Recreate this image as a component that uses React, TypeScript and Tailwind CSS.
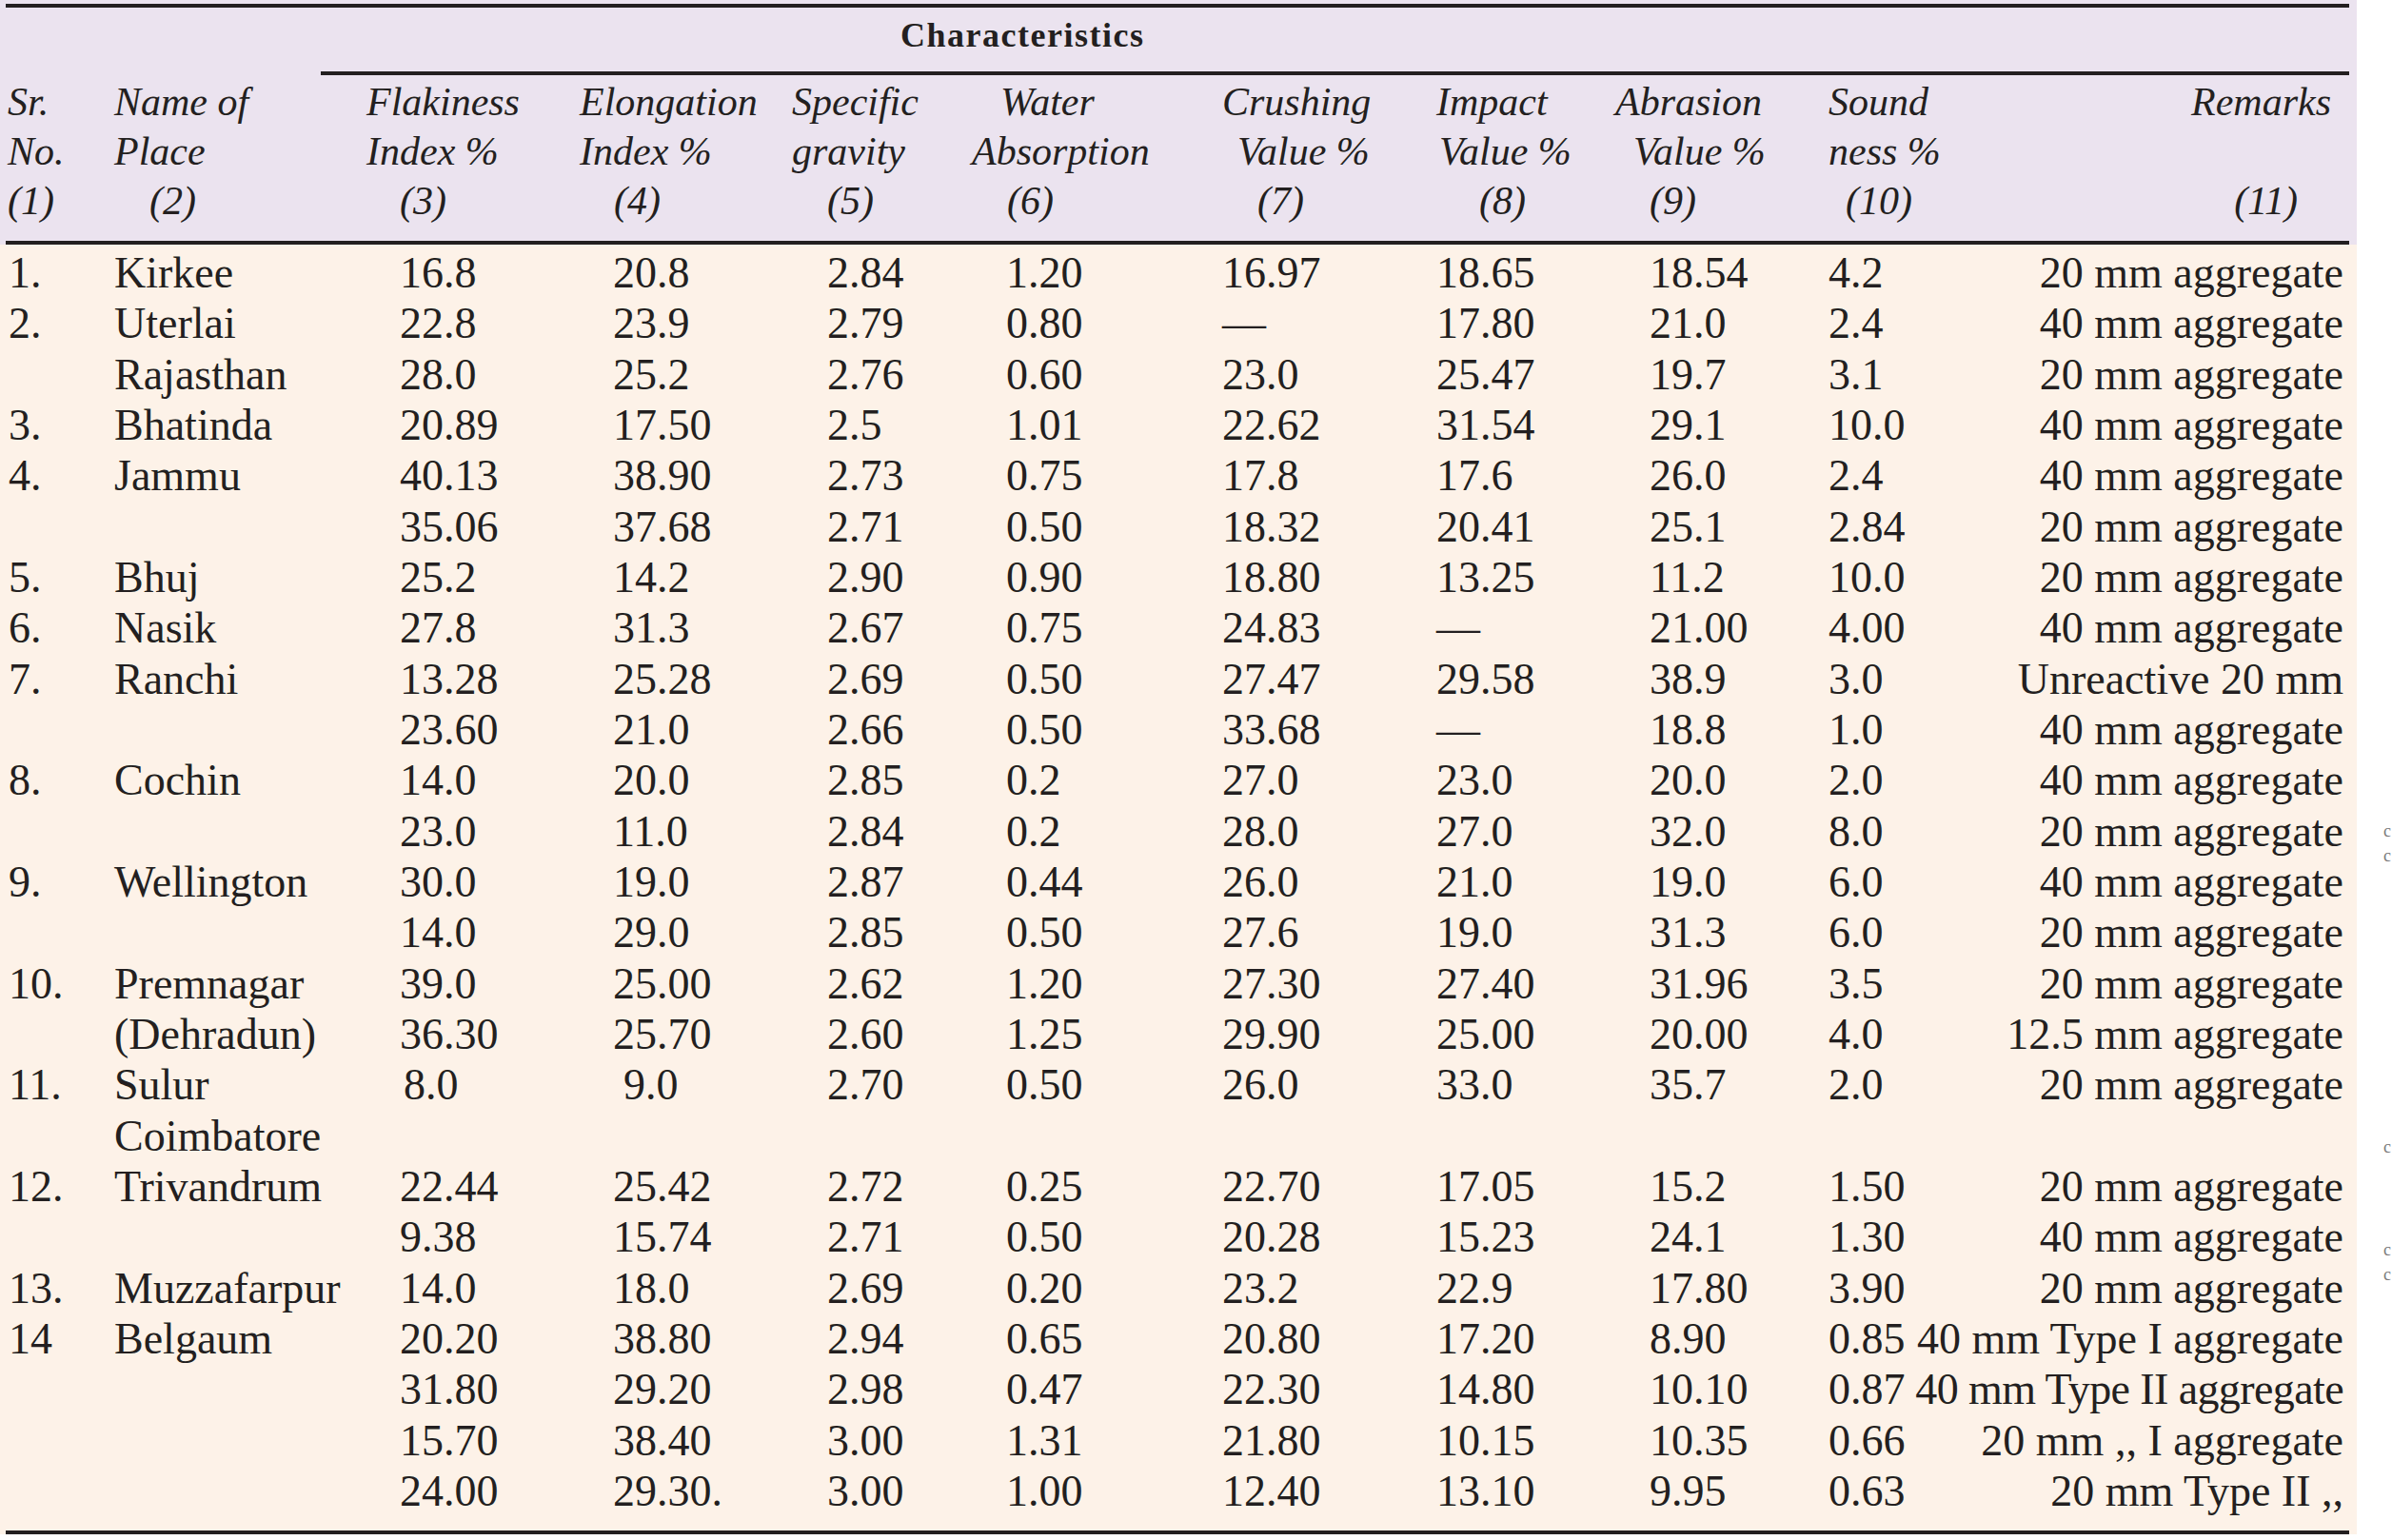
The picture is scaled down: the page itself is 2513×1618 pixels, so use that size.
import React from "react";

type Row = { sr: string; name: string; v: string[]; rem: string; remCls?: string };

const rows: Row[] = [
  { sr: "1.", name: "Kirkee", v: ["16.8", "20.8", "2.84", "1.20", "16.97", "18.65", "18.54", "4.2"], rem: "20 mm aggregate" },
  { sr: "2.", name: "Uterlai", v: ["22.8", "23.9", "2.79", "0.80", "—", "17.80", "21.0", "2.4"], rem: "40 mm aggregate" },
  { sr: "", name: "Rajasthan", v: ["28.0", "25.2", "2.76", "0.60", "23.0", "25.47", "19.7", "3.1"], rem: "20 mm aggregate" },
  { sr: "3.", name: "Bhatinda", v: ["20.89", "17.50", "2.5", "1.01", "22.62", "31.54", "29.1", "10.0"], rem: "40 mm aggregate" },
  { sr: "4.", name: "Jammu", v: ["40.13", "38.90", "2.73", "0.75", "17.8", "17.6", "26.0", "2.4"], rem: "40 mm aggregate" },
  { sr: "", name: "", v: ["35.06", "37.68", "2.71", "0.50", "18.32", "20.41", "25.1", "2.84"], rem: "20 mm aggregate" },
  { sr: "5.", name: "Bhuj", v: ["25.2", "14.2", "2.90", "0.90", "18.80", "13.25", "11.2", "10.0"], rem: "20 mm aggregate" },
  { sr: "6.", name: "Nasik", v: ["27.8", "31.3", "2.67", "0.75", "24.83", "—", "21.00", "4.00"], rem: "40 mm aggregate" },
  { sr: "7.", name: "Ranchi", v: ["13.28", "25.28", "2.69", "0.50", "27.47", "29.58", "38.9", "3.0"], rem: "Unreactive 20 mm" },
  { sr: "", name: "", v: ["23.60", "21.0", "2.66", "0.50", "33.68", "—", "18.8", "1.0"], rem: "40 mm aggregate" },
  { sr: "8.", name: "Cochin", v: ["14.0", "20.0", "2.85", "0.2", "27.0", "23.0", "20.0", "2.0"], rem: "40 mm aggregate" },
  { sr: "", name: "", v: ["23.0", "11.0", "2.84", "0.2", "28.0", "27.0", "32.0", "8.0"], rem: "20 mm aggregate" },
  { sr: "9.", name: "Wellington", v: ["30.0", "19.0", "2.87", "0.44", "26.0", "21.0", "19.0", "6.0"], rem: "40 mm aggregate" },
  { sr: "", name: "", v: ["14.0", "29.0", "2.85", "0.50", "27.6", "19.0", "31.3", "6.0"], rem: "20 mm aggregate" },
  { sr: "10.", name: "Premnagar", v: ["39.0", "25.00", "2.62", "1.20", "27.30", "27.40", "31.96", "3.5"], rem: "20 mm aggregate" },
  { sr: "", name: "(Dehradun)", v: ["36.30", "25.70", "2.60", "1.25", "29.90", "25.00", "20.00", "4.0"], rem: "12.5 mm aggregate" },
  { sr: "11.", name: "Sulur", v: ["8.0", "9.0", "2.70", "0.50", "26.0", "33.0", "35.7", "2.0"], rem: "20 mm aggregate" },
  { sr: "", name: "Coimbatore", v: ["", "", "", "", "", "", "", ""], rem: "" },
  { sr: "12.", name: "Trivandrum", v: ["22.44", "25.42", "2.72", "0.25", "22.70", "17.05", "15.2", "1.50"], rem: "20 mm aggregate" },
  { sr: "", name: "", v: ["9.38", "15.74", "2.71", "0.50", "20.28", "15.23", "24.1", "1.30"], rem: "40 mm aggregate" },
  { sr: "13.", name: "Muzzafarpur", v: ["14.0", "18.0", "2.69", "0.20", "23.2", "22.9", "17.80", "3.90"], rem: "20 mm aggregate" },
  { sr: "14", name: "Belgaum", v: ["20.20", "38.80", "2.94", "0.65", "20.80", "17.20", "8.90", "0.85"], rem: "40 mm Type I aggregate" },
  { sr: "", name: "", v: ["31.80", "29.20", "2.98", "0.47", "22.30", "14.80", "10.10", "0.87"], rem: "40 mm Type II aggregate", remCls: "tracking-[-0.6px]" },
  { sr: "", name: "", v: ["15.70", "38.40", "3.00", "1.31", "21.80", "10.15", "10.35", "0.66"], rem: "20 mm ,, I aggregate" },
  { sr: "", name: "", v: ["24.00", "29.30.", "3.00", "1.00", "12.40", "13.10", "9.95", "0.63"], rem: "20 mm Type II ,," },
];

const indent: Record<string, string> = {
  "16-0": "pl-[4px]",
  "16-1": "pl-[11px]",
};

type HLine = [string, string];
const headCols: HLine[][] = [
  [["Sr.", ""], ["No.", ""], ["(1)", ""]],
  [["Name of", ""], ["Place", ""], ["(2)", "ml-[37px]"]],
  [["Flakiness", ""], ["Index %", ""], ["(3)", "ml-[35px]"]],
  [["Elongation", ""], ["Index %", ""], ["(4)", "ml-[36px]"]],
  [["Specific", ""], ["gravity", ""], ["(5)", "ml-[37px]"]],
  [["Water", "ml-[30px]"], ["Absorption", ""], ["(6)", "ml-[37px]"]],
  [["Crushing", ""], ["Value %", "ml-[16px]"], ["(7)", "ml-[37px]"]],
  [["Impact", ""], ["Value %", "ml-[3px]"], ["(8)", "ml-[45px]"]],
  [["Abrasion", ""], ["Value %", "ml-[19px]"], ["(9)", "ml-[36px]"]],
  [["Sound", ""], ["ness %", ""], ["(10)", "ml-[18px]"]],
];

const glyphs = ["top-[864px]", "top-[890px]", "top-[1196px]", "top-[1304px]", "top-[1330px]"];

export default function App() {
  return (
    <div className="relative w-[2513px] h-[1618px] overflow-hidden bg-white text-[#231f20] font-['Liberation_Serif',serif]">
      <div className="w-[2476px] flex flex-col">
        {/* Header */}
        <div className="bg-[#ebe3ef] pt-[4px] flex flex-col">
          <div className="ml-[6px] w-[2462px] h-[4px] bg-[#231f20]" />
          <div className="pt-[7px] pl-[946px] text-[36px] leading-[44px] font-bold tracking-[1.5px] whitespace-nowrap">
            Characteristics
          </div>
          <div className="mt-[16px] ml-[337px] w-[2131px] h-[4px] bg-[#231f20]" />
          <div className="mt-[2px] pl-[8px] grid grid-cols-[112px_265px_224px_223px_189px_263px_225px_188px_224px_91px_450px] italic text-[42px] leading-[52px] whitespace-nowrap">
            {headCols.map((col, i) => (
              <div key={i} className="flex flex-col items-start">
                {col.map(([t, cls], j) => (
                  <div key={j} className={`h-[52px] ${cls}`}>
                    {t}
                  </div>
                ))}
              </div>
            ))}
            <div className="flex flex-col items-end">
              <div className="h-[52px] mr-[13px]">Remarks</div>
              <div className="h-[52px]" />
              <div className="h-[52px] mr-[48px]">(11)</div>
            </div>
          </div>
          <div className="mt-[16px] ml-[6px] w-[2462px] h-[4px] bg-[#231f20]" />
        </div>
        {/* Body */}
        <div className="bg-[#fdf2e8] pt-[3px] pb-[15px] flex flex-col text-[46px] leading-[53.33px] whitespace-nowrap">
          {rows.map((r, ri) => (
            <div
              key={ri}
              className="pl-[9px] grid grid-cols-[111px_300px_224px_225px_188px_227px_225px_224px_188px_541px] h-[53.33px]"
            >
              <div>{r.sr}</div>
              <div>{r.name}</div>
              {r.v.slice(0, 7).map((x, ci) => (
                <div key={ci} className={indent[`${ri}-${ci}`] ?? ""}>
                  {x}
                </div>
              ))}
              <div className="flex justify-between">
                <span>{r.v[7]}</span>
                <span className={r.remCls ?? ""}>{r.rem}</span>
              </div>
            </div>
          ))}
        </div>
        <div className="bg-[#fdf2e8] h-[4px] flex">
          <div className="ml-[6px] w-[2462px] h-[4px] bg-[#231f20]" />
        </div>
      </div>
      {glyphs.map((g, i) => (
        <div key={i} className={`absolute left-[2504px] ${g} text-[18px] leading-[18px] text-[#7a7a7a]`}>
          c
        </div>
      ))}
    </div>
  );
}
